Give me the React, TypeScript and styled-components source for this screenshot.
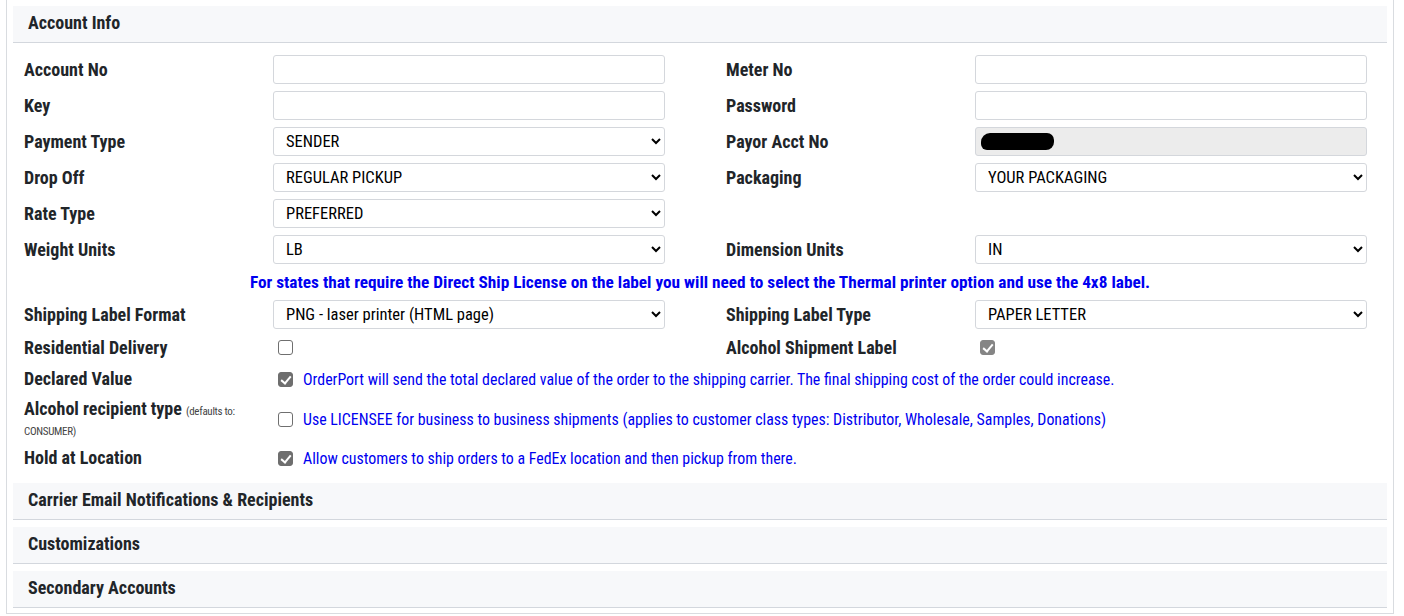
import React from 'react';
import styled, { createGlobalStyle } from 'styled-components';

const GlobalStyle = createGlobalStyle`
  body {
    margin: 0;
    background: #fff;
    font-family: "Roboto Condensed", Roboto, "Liberation Sans", sans-serif;
    color: #212529;
  }
`;

const Page = styled.div`
  margin-left: 6px;
  width: 1374px;
  padding: 6px 6px 5px;
  border: 1px solid #d9dce0;
  border-top: none;
`;

const SectionHeader = styled.div<{ $spaced?: boolean }>`
  box-sizing: border-box;
  height: 37px;
  display: flex;
  align-items: center;
  padding: 0 0 4px 15px;
  background: #f7f8fa;
  border-bottom: 1px solid #d3d7dd;
  font-size: 18px;
  font-weight: 700;
  color: #212529;
  margin-top: ${p => (p.$spaced ? '7px' : '0')};
`;

const FormBody = styled.div`
  display: flex;
  flex-direction: column;
  gap: 7px;
  padding: 12px 0 13px 11px;
`;

const FieldRow = styled.div<{ $height?: number }>`
  display: grid;
  grid-template-columns: 249px 392px 61px 249px 392px;
  align-items: center;
  min-height: ${p => p.$height ?? 29}px;
`;

const Label = styled.div`
  font-size: 18px;
  font-weight: 700;
  color: #212529;
  line-height: 20px;
`;

const RightLabel = styled(Label)`
  grid-column: 4;
`;

const Hint = styled.span`
  font-size: 11px;
  font-weight: 400;
  color: #444;
  line-height: 13px;
  letter-spacing: -0.3px;
`;

const TextInput = styled.input`
  box-sizing: border-box;
  height: 29px;
  width: 100%;
  border: 1px solid #d4d7dc;
  border-radius: 3px;
  background: #fff;
  padding: 0 12px;
  font-family: inherit;
  font-size: 16px;
  color: #000;
  outline: none;
`;

const ReadonlyField = styled.div`
  box-sizing: border-box;
  height: 29px;
  border: 1px solid #d4d7dc;
  border-radius: 3px;
  background: #ececec;
  display: flex;
  align-items: center;
  padding-left: 5px;
`;

const Redaction = styled.span`
  display: block;
  width: 73px;
  height: 17px;
  background: #000;
  border-radius: 9px 7px 8px 6px;
`;

const Select = styled.select`
  box-sizing: border-box;
  height: 29px;
  width: 100%;
  border: 1px solid #d4d7dc;
  border-radius: 3px;
  background: #fff;
  padding: 0 8px;
  font-family: inherit;
  font-size: 16.5px;
  color: #000;
  outline: none;
`;

const Notice = styled.div`
  grid-column: 1 / -1;
  text-align: center;
  font-size: 17.3px;
  font-weight: 700;
  color: #0000f0;
  padding-left: 9px;
  line-height: 22px;
`;

const CheckCell = styled.label<{ $col?: number }>`
  grid-column: ${p => (p.$col ? `${p.$col} / -1` : 'auto')};
  display: flex;
  align-items: center;
  gap: 10px;
  padding-left: 5px;
  font-size: 15.9px;
  color: #0000f0;
`;

const Checkbox = styled.input.attrs({ type: 'checkbox' })`
  appearance: none;
  position: relative;
  box-sizing: border-box;
  width: 15px;
  height: 15px;
  margin: 0;
  flex-shrink: 0;
  border: 1px solid #6f6f6f;
  border-radius: 3px;
  background: #fff;

  &:checked {
    background: #6e6e6e;
    border-color: #6e6e6e;
  }

  &:checked::after {
    content: '';
    position: absolute;
    left: 4px;
    top: 1px;
    width: 4px;
    height: 8px;
    border: solid #fff;
    border-width: 0 2px 2px 0;
    transform: rotate(40deg);
  }

  &:disabled:checked {
    background: #858585;
    border-color: #858585;
  }
`;

const selectOptions: Record<string, string[]> = {
  payment: ['SENDER', 'RECIPIENT', 'THIRD PARTY'],
  dropoff: ['REGULAR PICKUP', 'REQUEST COURIER', 'DROP BOX', 'BUSINESS SERVICE CENTER', 'STATION'],
  rate: ['PREFERRED', 'LIST', 'ACCOUNT'],
  weight: ['LB', 'KG'],
  packaging: ['YOUR PACKAGING', 'FEDEX BOX', 'FEDEX ENVELOPE', 'FEDEX PAK', 'FEDEX TUBE'],
  dimension: ['IN', 'CM'],
  labelFormat: ['PNG - laser printer (HTML page)', 'PDF - laser printer', 'ZPL - thermal printer (4x8)'],
  labelType: ['PAPER LETTER', 'PAPER 4X6', 'STOCK 4X8'],
};

const Dropdown: React.FC<{ name: string }> = ({ name }) => (
  <Select defaultValue={selectOptions[name][0]}>
    {selectOptions[name].map(o => (
      <option key={o} value={o}>{o}</option>
    ))}
  </Select>
);

const App: React.FC = () => {
  return (
    <>
      <GlobalStyle />
      <Page>
        <SectionHeader>Account Info</SectionHeader>
        <FormBody>
          <FieldRow>
            <Label>Account No</Label>
            <TextInput />
            <RightLabel>Meter No</RightLabel>
            <TextInput />
          </FieldRow>
          <FieldRow>
            <Label>Key</Label>
            <TextInput />
            <RightLabel>Password</RightLabel>
            <TextInput type="password" />
          </FieldRow>
          <FieldRow>
            <Label>Payment Type</Label>
            <Dropdown name="payment" />
            <RightLabel>Payor Acct No</RightLabel>
            <ReadonlyField>
              <Redaction />
            </ReadonlyField>
          </FieldRow>
          <FieldRow>
            <Label>Drop Off</Label>
            <Dropdown name="dropoff" />
            <RightLabel>Packaging</RightLabel>
            <Dropdown name="packaging" />
          </FieldRow>
          <FieldRow>
            <Label>Rate Type</Label>
            <Dropdown name="rate" />
          </FieldRow>
          <FieldRow>
            <Label>Weight Units</Label>
            <Dropdown name="weight" />
            <RightLabel>Dimension Units</RightLabel>
            <Dropdown name="dimension" />
          </FieldRow>
          <FieldRow $height={22}>
            <Notice>
              For states that require the Direct Ship License on the label you will need to select the Thermal printer option and use the 4x8 label.
            </Notice>
          </FieldRow>
          <FieldRow>
            <Label>Shipping Label Format</Label>
            <Dropdown name="labelFormat" />
            <RightLabel>Shipping Label Type</RightLabel>
            <Dropdown name="labelType" />
          </FieldRow>
          <FieldRow $height={23}>
            <Label>Residential Delivery</Label>
            <CheckCell>
              <Checkbox />
            </CheckCell>
            <RightLabel>Alcohol Shipment Label</RightLabel>
            <CheckCell>
              <Checkbox defaultChecked disabled />
            </CheckCell>
          </FieldRow>
          <FieldRow $height={26}>
            <Label>Declared Value</Label>
            <CheckCell $col={2}>
              <Checkbox defaultChecked />
              OrderPort will send the total declared value of the order to the shipping carrier. The final shipping cost of the order could increase.
            </CheckCell>
          </FieldRow>
          <FieldRow $height={38}>
            <Label>
              Alcohol recipient type <Hint>(defaults to:</Hint>
              <br />
              <Hint>CONSUMER)</Hint>
            </Label>
            <CheckCell $col={2}>
              <Checkbox />
              Use LICENSEE for business to business shipments (applies to customer class types: Distributor, Wholesale, Samples, Donations)
            </CheckCell>
          </FieldRow>
          <FieldRow $height={24}>
            <Label>Hold at Location</Label>
            <CheckCell $col={2}>
              <Checkbox defaultChecked />
              Allow customers to ship orders to a FedEx location and then pickup from there.
            </CheckCell>
          </FieldRow>
        </FormBody>
        <SectionHeader>Carrier Email Notifications &amp; Recipients</SectionHeader>
        <SectionHeader $spaced>Customizations</SectionHeader>
        <SectionHeader $spaced>Secondary Accounts</SectionHeader>
      </Page>
    </>
  );
};

export default App;
